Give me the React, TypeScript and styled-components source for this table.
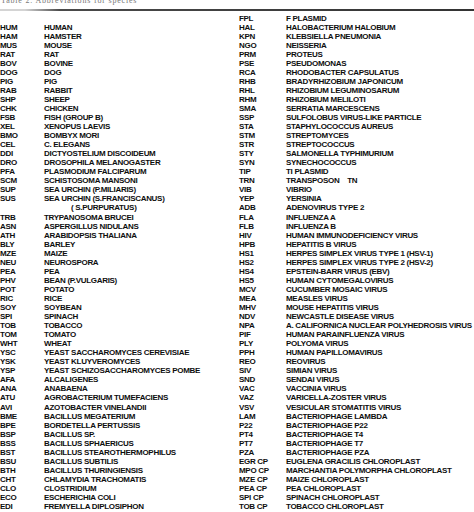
import React from "react";
import styled, { createGlobalStyle } from "styled-components";

type Entry = [string, string];

const left: Entry[] = [
  ["HUM", "HUMAN"],
  ["HAM", "HAMSTER"],
  ["MUS", "MOUSE"],
  ["RAT", "RAT"],
  ["BOV", "BOVINE"],
  ["DOG", "DOG"],
  ["PIG", "PIG"],
  ["RAB", "RABBIT"],
  ["SHP", "SHEEP"],
  ["CHK", "CHICKEN"],
  ["FSB", "FISH (GROUP B)"],
  ["XEL", "XENOPUS LAEVIS"],
  ["BMO", "BOMBYX MORI"],
  ["CEL", "C. ELEGANS"],
  ["DDI", "DICTYOSTELIUM DISCOIDEUM"],
  ["DRO", "DROSOPHILA MELANOGASTER"],
  ["PFA", "PLASMODIUM FALCIPARUM"],
  ["SCM", "SCHISTOSOMA MANSONI"],
  ["SUP", "SEA URCHIN (P.MILIARIS)"],
  ["SUS", "SEA URCHIN (S.FRANCISCANUS)"],
  ["", "              ( S.PURPURATUS)"],
  ["TRB", "TRYPANOSOMA BRUCEI"],
  ["ASN", "ASPERGILLUS NIDULANS"],
  ["ATH", "ARABIDOPSIS THALIANA"],
  ["BLY", "BARLEY"],
  ["MZE", "MAIZE"],
  ["NEU", "NEUROSPORA"],
  ["PEA", "PEA"],
  ["PHV", "BEAN (P.VULGARIS)"],
  ["POT", "POTATO"],
  ["RIC", "RICE"],
  ["SOY", "SOYBEAN"],
  ["SPI", "SPINACH"],
  ["TOB", "TOBACCO"],
  ["TOM", "TOMATO"],
  ["WHT", "WHEAT"],
  ["YSC", "YEAST SACCHAROMYCES CEREVISIAE"],
  ["YSK", "YEAST KLUYVEROMYCES"],
  ["YSP", "YEAST SCHIZOSACCHAROMYCES POMBE"],
  ["AFA", "ALCALIGENES"],
  ["ANA", "ANABAENA"],
  ["ATU", "AGROBACTERIUM TUMEFACIENS"],
  ["AVI", "AZOTOBACTER VINELANDII"],
  ["BME", "BACILLUS MEGATERIUM"],
  ["BPE", "BORDETELLA PERTUSSIS"],
  ["BSP", "BACILLUS SP."],
  ["BSS", "BACILLUS SPHAERICUS"],
  ["BST", "BACILLUS STEAROTHERMOPHILUS"],
  ["BSU", "BACILLUS SUBTILIS"],
  ["BTH", "BACILLUS THURINGIENSIS"],
  ["CHT", "CHLAMYDIA TRACHOMATIS"],
  ["CLO", "CLOSTRIDIUM"],
  ["ECO", "ESCHERICHIA COLI"],
  ["EDI", "FREMYELLA DIPLOSIPHON"],
];

const right: Entry[] = [
  ["FPL", "F PLASMID"],
  ["HAL", "HALOBACTERIUM HALOBIUM"],
  ["KPN", "KLEBSIELLA PNEUMONIA"],
  ["NGO", "NEISSERIA"],
  ["PRM", "PROTEUS"],
  ["PSE", "PSEUDOMONAS"],
  ["RCA", "RHODOBACTER CAPSULATUS"],
  ["RHB", "BRADYRHIZOBIUM JAPONICUM"],
  ["RHL", "RHIZOBIUM LEGUMINOSARUM"],
  ["RHM", "RHIZOBIUM MELILOTI"],
  ["SMA", "SERRATIA MARCESCENS"],
  ["SSP", "SULFOLOBUS VIRUS-LIKE PARTICLE"],
  ["STA", "STAPHYLOCOCCUS AUREUS"],
  ["STM", "STREPTOMYCES"],
  ["STR", "STREPTOCOCCUS"],
  ["STY", "SALMONELLA TYPHIMURIUM"],
  ["SYN", "SYNECHOCOCCUS"],
  ["TIP", "TI PLASMID"],
  ["TRN", "TRANSPOSON    TN"],
  ["VIB", "VIBRIO"],
  ["YEP", "YERSINIA"],
  ["ADB", "ADENOVIRUS TYPE 2"],
  ["FLA", "INFLUENZA A"],
  ["FLB", "INFLUENZA B"],
  ["HIV", "HUMAN IMMUNODEFICIENCY VIRUS"],
  ["HPB", "HEPATITIS B VIRUS"],
  ["HS1", "HERPES SIMPLEX VIRUS TYPE 1 (HSV-1)"],
  ["HS2", "HERPES SIMPLEX VIRUS TYPE 2 (HSV-2)"],
  ["HS4", "EPSTEIN-BARR VIRUS (EBV)"],
  ["HS5", "HUMAN CYTOMEGALOVIRUS"],
  ["MCV", "CUCUMBER MOSAIC VIRUS"],
  ["MEA", "MEASLES VIRUS"],
  ["MHV", "MOUSE HEPATITIS VIRUS"],
  ["NDV", "NEWCASTLE DISEASE VIRUS"],
  ["NPA", "A. CALIFORNICA NUCLEAR POLYHEDROSIS VIRUS"],
  ["PIF", "HUMAN PARAINFLUENZA VIRUS"],
  ["PLY", "POLYOMA VIRUS"],
  ["PPH", "HUMAN PAPILLOMAVIRUS"],
  ["REO", "REOVIRUS"],
  ["SIV", "SIMIAN VIRUS"],
  ["SND", "SENDAI VIRUS"],
  ["VAC", "VACCINIA VIRUS"],
  ["VAZ", "VARICELLA-ZOSTER VIRUS"],
  ["VSV", "VESICULAR STOMATITIS VIRUS"],
  ["LAM", "BACTERIOPHAGE LAMBDA"],
  ["P22", "BACTERIOPHAGE P22"],
  ["PT4", "BACTERIOPHAGE T4"],
  ["PT7", "BACTERIOPHAGE T7"],
  ["PZA", "BACTERIOPHAGE PZA"],
  ["EGR CP", "EUGLENA GRACILIS CHLOROPLAST"],
  ["MPO CP", "MARCHANTIA POLYMORPHA CHLOROPLAST"],
  ["MZE CP", "MAIZE CHLOROPLAST"],
  ["PEA CP", "PEA CHLOROPLAST"],
  ["SPI CP", "SPINACH CHLOROPLAST"],
  ["TOB CP", "TOBACCO CHLOROPLAST"],
];

const ROW = 9.06;

const GlobalStyle = createGlobalStyle`
  html, body {
    margin: 0;
    background: #ffffff;
  }
  body {
    font-family: "Liberation Sans", Arial, sans-serif;
    color: #0e0e0e;
  }
`;

const App: React.FC = () => {
  return (
    <Page>
      <GlobalStyle />
      <Caption>Table 2. Abbreviations for species</Caption>
      <Rule />
      <Columns>
        <Column offset={1} inset={0}>
          {left.map(([code, name], i) => (
            <Row key={i} codeWidth={44}>
              <span>{code}</span>
              <span>{name}</span>
            </Row>
          ))}
        </Column>
        <Column offset={0} inset={2}>
          {right.map(([code, name], i) => (
            <Row key={i} codeWidth={47}>
              <span>{code}</span>
              <span>{name}</span>
            </Row>
          ))}
        </Column>
      </Columns>
    </Page>
  );
};

export default App;

const Page = styled.div`
  width: 474px;
  height: 512px;
  overflow: hidden;
`;

const Caption = styled.div`
  height: 5px;
  overflow: hidden;
  font-family: "Liberation Serif", serif;
  font-size: 8px;
  line-height: 2px;
  color: #777;
  padding-left: 1px;
  letter-spacing: 0.8px;
`;

const Rule = styled.div`
  margin-top: 4px;
  height: 2px;
  background: linear-gradient(
    to right,
    #d4d4d4 0,
    #d4d4d4 25px,
    #4a4a4a 60px,
    #333 100%
  );
`;

const Columns = styled.div`
  display: grid;
  grid-template-columns: 237px 237px;
  margin-top: 2.5px;
`;

interface ColumnProps {
  offset: number;
  inset: number;
}

const Column = styled.div<ColumnProps>`
  display: flex;
  flex-direction: column;
  padding-top: ${p => p.offset * ROW}px;
  padding-left: ${p => p.inset}px;
  min-width: 0;
`;

interface RowProps {
  codeWidth: number;
}

const Row = styled.div<RowProps>`
  display: grid;
  grid-template-columns: ${p => p.codeWidth}px 1fr;
  height: ${ROW}px;
  line-height: ${ROW}px;
  font-size: 8px;
  font-weight: bold;
  letter-spacing: -0.3px;
  white-space: pre;
`;
